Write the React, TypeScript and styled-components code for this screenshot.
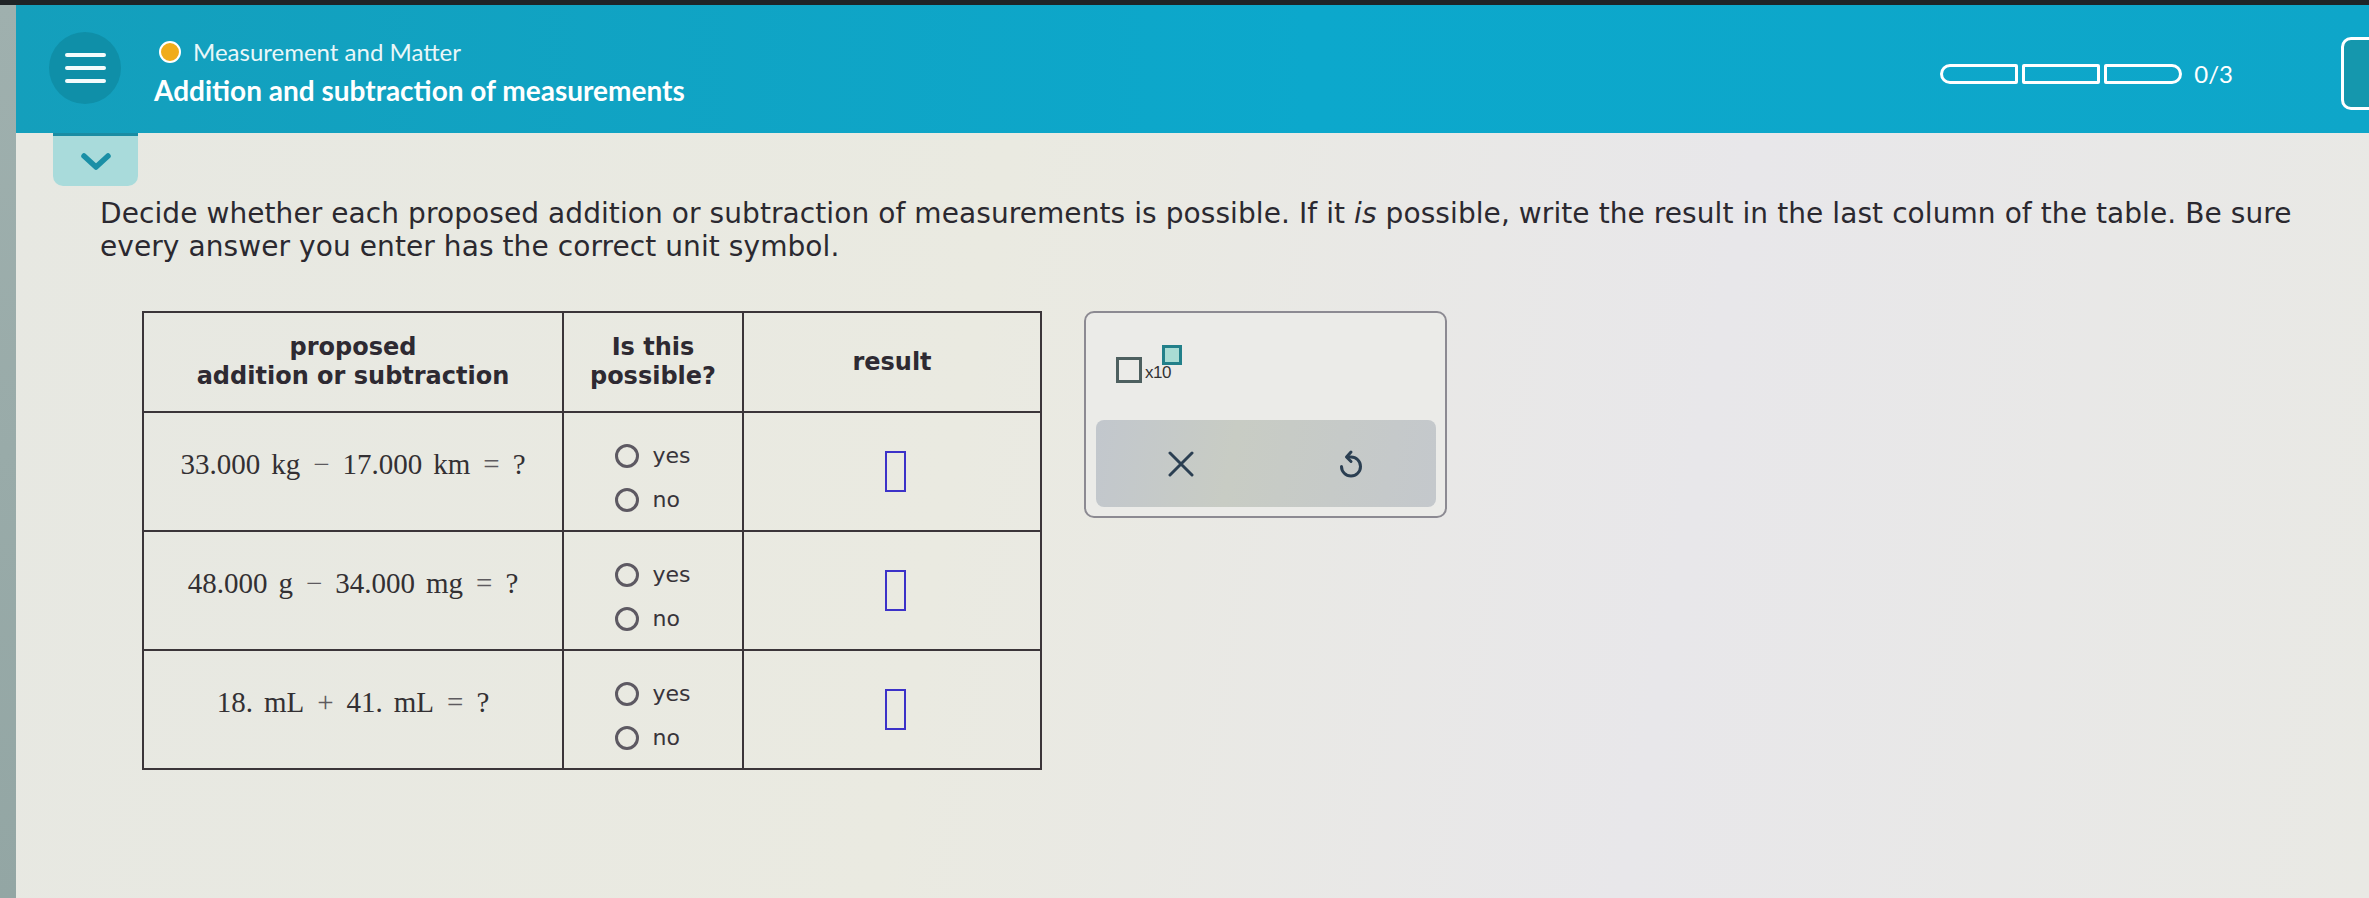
import React from 'react';
import styled, { createGlobalStyle } from 'styled-components';

const GlobalStyle = createGlobalStyle`
  html, body {
    margin: 0;
    padding: 0;
    background: #1f2427;
  }
  #root {
    min-height: 100vh;
  }
`;

const bodyFont = `"DejaVu Sans", Verdana, sans-serif`;

const Page = styled.div`
  display: flex;
  flex-direction: column;
  min-height: 100vh;
  padding-top: 5px;
  box-sizing: border-box;
`;

const Body = styled.div`
  display: flex;
  flex: 1;
`;

const LeftStrip = styled.div`
  width: 16px;
  flex-shrink: 0;
  background: linear-gradient(180deg, #9fb0ae, #93a6a4);
`;

const Main = styled.div`
  flex: 1;
  display: flex;
  flex-direction: column;
  min-width: 0;
`;

const Header = styled.header`
  height: 128px;
  display: flex;
  align-items: center;
  padding-left: 33px;
  background: linear-gradient(90deg, #149fbc 0%, #0ca8cc 55%, #0ea6c9 100%);
  overflow: hidden;
  font-family: Lato, "Open Sans", sans-serif;
  color: #ffffff;
`;

const MenuButton = styled.div`
  width: 72px;
  height: 72px;
  margin-bottom: 3px;
  border-radius: 50%;
  background: #0f8fa8;
  display: flex;
  flex-direction: column;
  align-items: center;
  justify-content: center;
  gap: 9px;
  flex-shrink: 0;
`;

const MenuLine = styled.span`
  width: 41px;
  height: 4px;
  border-radius: 2px;
  background: #f4fbfc;
`;

const Titles = styled.div`
  margin-left: 33px;
  padding-top: 6px;
  display: flex;
  flex-direction: column;
  gap: 5px;
`;

const Subject = styled.div`
  display: flex;
  align-items: center;
  gap: 12px;
  padding-left: 5px;
  font-size: 24px;
  line-height: 30px;
  color: #e9f7f9;
`;

const Dot = styled.span`
  width: 18px;
  height: 18px;
  border-radius: 50%;
  background: #f0ac1a;
  border: 2px solid #ffffff;
`;

const Title = styled.div`
  font-size: 28px;
  font-weight: 700;
  line-height: 36px;
`;

const Progress = styled.div`
  margin-left: auto;
  margin-top: 9px;
  display: flex;
  align-items: center;
  gap: 4px;
`;

const Segment = styled.span<{ $pos: 'first' | 'mid' | 'last' }>`
  width: 78px;
  height: 20px;
  box-sizing: border-box;
  border: 3px solid #ffffff;
  border-radius: ${p =>
    p.$pos === 'first' ? '10px 2px 2px 10px' : p.$pos === 'last' ? '2px 10px 10px 2px' : '2px'};
`;

const Count = styled.span`
  margin-left: 8px;
  font-size: 24px;
  color: #ffffff;
`;

const EndButton = styled.div`
  margin-left: 108px;
  margin-right: -32px;
  margin-top: 9px;
  width: 60px;
  height: 73px;
  flex-shrink: 0;
  box-sizing: border-box;
  border: 3px solid #ffffff;
  border-radius: 10px;
  background: #1597ad;
`;

const Content = styled.main`
  flex: 1;
  background: linear-gradient(100deg, #e7e8e2 0%, #eaeae1 40%, #e8e7ea 70%, #e9e9e4 100%);
  padding-left: 37px;
  padding-bottom: 40px;
`;

const Tab = styled.div`
  width: 85px;
  height: 50px;
  border-top: 3px solid #1a8ca3;
  border-radius: 0 0 10px 10px;
  background: #a9dbdb;
  display: flex;
  align-items: center;
  justify-content: center;
`;

const Instructions = styled.p`
  margin: 11px 0 0 47px;
  font-family: ${bodyFont};
  font-size: 28px;
  line-height: 33px;
  letter-spacing: 0.08px;
  color: #2b2930;
  white-space: nowrap;
`;

const Workspace = styled.div`
  display: flex;
  align-items: flex-start;
  gap: 42px;
  margin: 48px 0 0 89px;
`;

const Table = styled.table`
  border-collapse: collapse;
  border: 2px solid #3b3539;
  font-family: ${bodyFont};
  color: #2e2a32;
`;

const HeadCell = styled.th<{ $w: number }>`
  width: ${p => p.$w}px;
  height: 98px;
  border: 2px solid #3b3539;
  padding: 0;
  font-size: 24px;
  line-height: 29px;
  font-weight: 700;
  text-align: center;
`;

const Cell = styled.td`
  height: 117px;
  border: 2px solid #3b3539;
  padding: 0;
  text-align: center;
  vertical-align: middle;
`;

const Expr = styled.div`
  padding-bottom: 14px;
  font-family: "Liberation Serif", "Times New Roman", serif;
  font-size: 29px;
  color: #333033;
  white-space: nowrap;
`;

const Op = styled.span`
  margin: 0 13px;
  color: #5d5a5e;
`;

const Unit = styled.span`
  margin-left: 11px;
`;

const Choices = styled.div`
  display: inline-flex;
  flex-direction: column;
  gap: 14px;
  padding-top: 12px;
`;

const Choice = styled.label`
  display: flex;
  align-items: center;
  gap: 13px;
  font-size: 22px;
  line-height: 30px;
  color: #38343a;
`;

const RadioCircle = styled.span`
  width: 24px;
  height: 24px;
  box-sizing: border-box;
  border-radius: 50%;
  border: 3.5px solid #5d5962;
`;

const AnswerBox = styled.span`
  display: inline-block;
  width: 21px;
  height: 41px;
  margin-left: 6px;
  box-sizing: border-box;
  border: 2px solid #3c32c8;
  vertical-align: middle;
`;

const Panel = styled.div`
  width: 363px;
  height: 207px;
  box-sizing: border-box;
  border: 2px solid #8c8a92;
  border-radius: 10px;
  background: #ebebe8;
  padding: 32px 9px 9px 10px;
  display: flex;
  flex-direction: column;
`;

const SciWidget = styled.div`
  display: flex;
  align-items: flex-start;
  margin-left: 20px;
  height: 39px;
`;

const BaseSquare = styled.span`
  margin-top: 12px;
  width: 26px;
  height: 26px;
  box-sizing: border-box;
  border: 3px solid #4d5f5f;
`;

const Times10 = styled.span`
  margin-top: 18px;
  margin-left: 3px;
  font-family: "Liberation Sans", Arial, sans-serif;
  font-size: 17px;
  line-height: 20px;
  letter-spacing: -0.5px;
  color: #333;
`;

const SupSquare = styled.span`
  margin-left: -9px;
  width: 20px;
  height: 20px;
  box-sizing: border-box;
  background: #a9dcd4;
  border: 3px solid #22808a;
`;

const ButtonBar = styled.div`
  margin-top: auto;
  height: 87px;
  border-radius: 8px;
  background: linear-gradient(100deg, #c2c7cd 0%, #c8ccc4 40%, #c4c8cc 100%);
  display: flex;
`;

const BarButton = styled.button`
  flex: 1;
  border: none;
  background: transparent;
  display: flex;
  align-items: center;
  justify-content: center;
  padding: 0;
  cursor: pointer;
`;

const Chevron = () => (
  <svg width="32" height="19" viewBox="0 0 32 19">
    <polyline points="4,4 16,15 28,4" fill="none" stroke="#1a8fa6" strokeWidth="5.5" strokeLinecap="round" strokeLinejoin="round" />
  </svg>
);

const CloseIcon = () => (
  <svg width="26" height="26" viewBox="0 0 26 26">
    <path d="M2 2 24 24M24 2 2 24" stroke="#2b3f52" strokeWidth="3" strokeLinecap="round" />
  </svg>
);

const UndoIcon = () => (
  <svg width="30" height="32" viewBox="0 0 30 32">
    <path d="M5.5 18.5a9.5 9.5 0 1 0 9.5-9.5h-3" fill="none" stroke="#2b3f52" strokeWidth="3" strokeLinecap="round" />
    <path d="M15 4 10.5 9 15 13.5" fill="none" stroke="#2b3f52" strokeWidth="3" strokeLinecap="round" strokeLinejoin="round" />
  </svg>
);

type Row = { a: string; ua: string; op: string; b: string; ub: string };

const rows: Row[] = [
  { a: '33.000', ua: 'kg', op: '−', b: '17.000', ub: 'km' },
  { a: '48.000', ua: 'g', op: '−', b: '34.000', ub: 'mg' },
  { a: '18.', ua: 'mL', op: '+', b: '41.', ub: 'mL' },
];

export default function App() {
  return (
    <>
      <GlobalStyle />
      <Page>
        <Body>
          <LeftStrip />
          <Main>
            <Header>
              <MenuButton>
                <MenuLine />
                <MenuLine />
                <MenuLine />
              </MenuButton>
              <Titles>
                <Subject>
                  <Dot />
                  Measurement and Matter
                </Subject>
                <Title>Addition and subtraction of measurements</Title>
              </Titles>
              <Progress>
                <Segment $pos="first" />
                <Segment $pos="mid" />
                <Segment $pos="last" />
                <Count>0/3</Count>
              </Progress>
              <EndButton />
            </Header>
            <Content>
              <Tab>
                <Chevron />
              </Tab>
              <Instructions>
                Decide whether each proposed addition or subtraction of measurements is possible. If it <i>is</i> possible,
                write the result in the last column of the table. Be sure
                <br />
                every answer you enter has the correct unit symbol.
              </Instructions>
              <Workspace>
                <Table>
                  <thead>
                    <tr>
                      <HeadCell $w={418}>
                        proposed
                        <br />
                        addition or subtraction
                      </HeadCell>
                      <HeadCell $w={178}>
                        Is this
                        <br />
                        possible?
                      </HeadCell>
                      <HeadCell $w={296}>result</HeadCell>
                    </tr>
                  </thead>
                  <tbody>
                    {rows.map((r, i) => (
                      <tr key={i}>
                        <Cell>
                          <Expr>
                            {r.a}
                            <Unit>{r.ua}</Unit>
                            <Op>{r.op}</Op>
                            {r.b}
                            <Unit>{r.ub}</Unit>
                            <Op>=</Op>?
                          </Expr>
                        </Cell>
                        <Cell>
                          <Choices>
                            <Choice>
                              <RadioCircle />
                              yes
                            </Choice>
                            <Choice>
                              <RadioCircle />
                              no
                            </Choice>
                          </Choices>
                        </Cell>
                        <Cell>
                          <AnswerBox />
                        </Cell>
                      </tr>
                    ))}
                  </tbody>
                </Table>
                <Panel>
                  <SciWidget>
                    <BaseSquare />
                    <Times10>x10</Times10>
                    <SupSquare />
                  </SciWidget>
                  <ButtonBar>
                    <BarButton aria-label="clear">
                      <CloseIcon />
                    </BarButton>
                    <BarButton aria-label="undo">
                      <UndoIcon />
                    </BarButton>
                  </ButtonBar>
                </Panel>
              </Workspace>
            </Content>
          </Main>
        </Body>
      </Page>
    </>
  );
}
